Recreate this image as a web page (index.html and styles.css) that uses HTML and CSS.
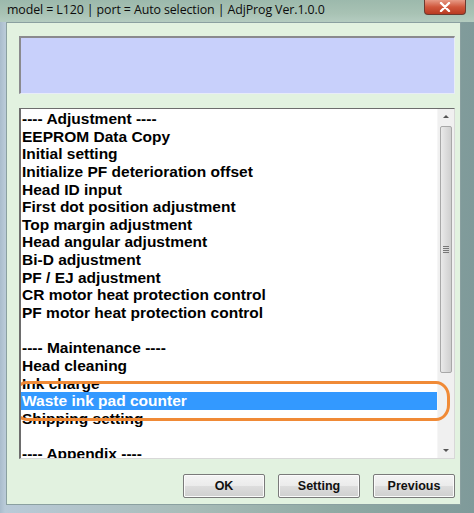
FILE: index.html
```html
<!DOCTYPE html>
<html>
<head>
<meta charset="utf-8">
<link rel="stylesheet" href="styles.css">
</head>
<body>
<div class="window">
  <div class="titlebar">
    <span class="title">model = L120 | port = Auto selection | AdjProg Ver.1.0.0</span>
    <div class="close"><svg width="12" height="10" viewBox="0 0 12 10"><path d="M2 1 L10 9 M10 1 L2 9" stroke="#fff" stroke-width="2.4" stroke-linecap="round"/></svg></div>
  </div>
  <div class="client">
    <div class="panel"></div>
    <div class="listbox">
      <div class="items">
        <div class="item">---- Adjustment ----</div>
        <div class="item">EEPROM Data Copy</div>
        <div class="item">Initial setting</div>
        <div class="item">Initialize PF deterioration offset</div>
        <div class="item">Head ID input</div>
        <div class="item">First dot position adjustment</div>
        <div class="item">Top margin adjustment</div>
        <div class="item">Head angular adjustment</div>
        <div class="item">Bi-D adjustment</div>
        <div class="item">PF / EJ adjustment</div>
        <div class="item">CR motor heat protection control</div>
        <div class="item">PF motor heat protection control</div>
        <div class="item">&nbsp;</div>
        <div class="item">---- Maintenance ----</div>
        <div class="item">Head cleaning</div>
        <div class="item">Ink charge</div>
        <div class="item selected">Waste ink pad counter</div>
        <div class="item">Shipping setting</div>
        <div class="item">&nbsp;</div>
        <div class="item">---- Appendix ----</div>
      </div>
      <div class="scrollbar">
        <div class="arrow up"></div>
        <div class="thumb"><div class="grip"></div></div>
        <div class="track"></div>
        <div class="arrow down"></div>
      </div>
      <div class="highlight"></div>
    </div>
    <div class="buttons">
      <div class="btn">OK</div>
      <div class="btn">Setting</div>
      <div class="btn">Previous</div>
    </div>
  </div>
</div>
</body>
</html>
```

FILE: styles.css
```css
html, body {
  margin: 0;
  padding: 0;
}
body {
  width: 474px;
  height: 513px;
  overflow: hidden;
  background: #9fb4b4;
}
.window {
  width: 474px;
  height: 513px;
  display: flex;
  flex-direction: column;
  background: linear-gradient(90deg, #a9bccc 0px, #b9cad8 5px, #a8bcb8 40%, #90aaa4 70%, #7f9a9a 100%);
}
.titlebar {
  height: 22px;
  flex: none;
  display: flex;
  align-items: center;
  padding-left: 7px;
  position: relative;
  background: linear-gradient(180deg, #9cb9ac 0%, #a8c2b4 60%, #b4ccc0 100%);
}
.title {
  font-family: "Open Sans", "Noto Sans", sans-serif;
  font-size: 12.4px;
  color: #0c0c0c;
  letter-spacing: -0.1px;
  margin-top: -4px;
}
.close {
  position: absolute;
  right: 8px;
  top: 0;
  width: 40px;
  height: 14px;
  border-radius: 0 0 4px 4px;
  background: linear-gradient(180deg, #e79a86 0%, #d0573c 50%, #b83a22 100%);
  border: 1px solid #6b3a30;
  border-top: none;
  display: flex;
  align-items: center;
  justify-content: center;
}
.client {
  flex: none;
  margin: 0 13px 0 6px;
  height: 483px;
  background: #e2f2e0;
  border: 1px solid #8aa0a0;
  box-sizing: border-box;
  padding: 13px 4px 0 12px;
  display: flex;
  flex-direction: column;
}
.panel {
  height: 58px;
  width: 436px;
  box-sizing: border-box;
  background: #c8d0fb;
  border-top: 2px solid #8a8a8e;
  border-left: 2px solid #8a8a8e;
  border-right: 1px solid #e8ecf8;
  border-bottom: 1px solid #e8ecf8;
  flex: none;
}
.listbox {
  margin-top: 14px;
  height: 351px;
  width: 436px;
  box-sizing: border-box;
  background: #fff;
  border-top: 1px solid #6d6d6d;
  border-left: 2px solid #6d6d6d;
  border-right: 1px solid #d8d8d8;
  border-bottom: 1px solid #d8d8d8;
  display: flex;
  position: relative;
  overflow: hidden;
  flex: none;
}
.items {
  flex: 1;
  padding-top: 1px;
  overflow: hidden;
}
.item {
  font-family: "Liberation Sans", Arial, sans-serif;
  font-weight: bold;
  font-size: 15.5px;
  line-height: 17.65px;
  height: 17.65px;
  padding-left: 1px;
  color: #000;
  white-space: nowrap;
}
.item.selected {
  background: #3399ff;
  color: #fff;
}
.scrollbar {
  width: 16px;
  flex: none;
  background: #f0f0f0;
  display: flex;
  flex-direction: column;
  align-items: center;
  border-left: 1px solid #f6f6f6;
}
.arrow {
  width: 0;
  height: 0;
  border-left: 3px solid transparent;
  border-right: 3px solid transparent;
  flex: none;
}
.arrow.up {
  border-bottom: 3px solid #555;
  margin-top: 6px;
  margin-bottom: 8px;
}
.arrow.down {
  border-top: 3px solid #555;
  margin-bottom: 6px;
  margin-top: 6px;
}
.thumb {
  width: 12px;
  height: 247px;
  box-sizing: border-box;
  border: 1px solid #a8a8a8;
  border-radius: 2px;
  background: linear-gradient(90deg, #eaeaea 0%, #dcdcdc 50%, #cfcfcf 100%);
  display: flex;
  align-items: center;
  justify-content: center;
  flex: none;
}
.grip {
  width: 6px;
  height: 7px;
  background: repeating-linear-gradient(180deg, #777 0 1px, transparent 1px 2px);
}
.track {
  flex: 1;
}
.highlight {
  position: absolute;
  left: -8px;
  top: 272px;
  width: 431px;
  height: 34px;
  border: 3.5px solid #f08a36;
  border-radius: 14px / 16px;
  pointer-events: none;
}
.buttons {
  margin-top: 15px;
  display: flex;
  justify-content: flex-end;
  gap: 13px;
  padding-right: 1px;
}
.btn {
  width: 82px;
  height: 24px;
  box-sizing: border-box;
  border: 1px solid #7a7a7a;
  border-radius: 2px;
  background: linear-gradient(180deg, #f4f4f4 0%, #ebebeb 50%, #dddddd 51%, #cfcfcf 100%);
  box-shadow: inset 0 0 0 1px #fbfbfb;
  font-family: "Liberation Sans", Arial, sans-serif;
  font-weight: bold;
  font-size: 12.5px;
  color: #111;
  display: flex;
  align-items: center;
  justify-content: center;
}
```
